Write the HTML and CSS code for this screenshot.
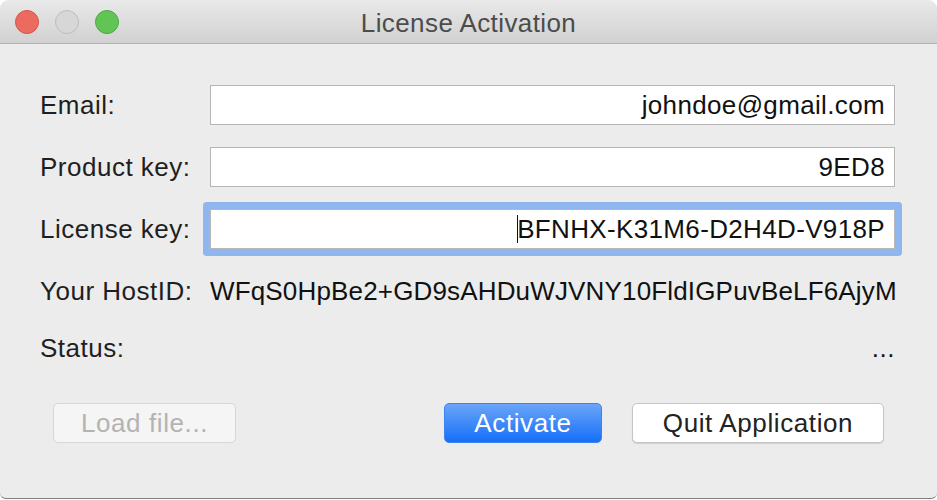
FILE: index.html
```html
<!DOCTYPE html>
<html>
<head>
<meta charset="utf-8">
<link rel="stylesheet" href="styles.css">
</head>
<body>
<div class="window">
  <div class="titlebar">
    <div class="lights">
      <span class="light red"></span>
      <span class="light gray"></span>
      <span class="light green"></span>
    </div>
    <div class="title">License Activation</div>
  </div>
  <div class="content">
    <div class="row">
      <div class="label">Email:</div>
      <div class="field">johndoe@gmail.com</div>
    </div>
    <div class="row">
      <div class="label">Product key:</div>
      <div class="field">9ED8</div>
    </div>
    <div class="row">
      <div class="label">License key:</div>
      <div class="field focused"><span class="caret"></span>BFNHX-K31M6-D2H4D-V918P</div>
    </div>
    <div class="row">
      <div class="label">Your HostID:</div>
      <div class="value host">WFqS0HpBe2+GD9sAHDuWJVNY10FldIGPuvBeLF6AjyM</div>
    </div>
    <div class="row status">
      <div class="label">Status:</div>
      <div class="value right">...</div>
    </div>
    <div class="buttons">
      <button class="btn disabled">Load file...</button>
      <div class="spacer"></div>
      <button class="btn primary">Activate</button>
      <button class="btn normal">Quit Application</button>
    </div>
  </div>
</div>
</body>
</html>
```
FILE: styles.css
```css
html, body {
  margin: 0;
  padding: 0;
  background: #ffffff;
}
body {
  font-family: "Liberation Sans", Arial, sans-serif;
  width: 937px;
  height: 500px;
  overflow: hidden;
}
.window {
  width: 937px;
  height: 498px;
  background: #ececec;
  border-radius: 9px 9px 6px 6px;
  border-bottom: 1px solid #7e7e7e;
  overflow: hidden;
  display: flex;
  flex-direction: column;
}
.titlebar {
  height: 43px;
  flex: none;
  background: linear-gradient(#e9e9e9, #d1d1d1);
  border-bottom: 1px solid #b2b2b2;
  display: flex;
  align-items: center;
  position: relative;
}
.lights {
  display: flex;
  gap: 16px;
  padding-left: 15px;
}
.light {
  width: 24px;
  height: 24px;
  border-radius: 50%;
  box-sizing: border-box;
}
.red { background: #ed6a5e; border: 1px solid #d3564a; }
.gray { background: #d7d7d7; border: 1px solid #bdbdbd; }
.green { background: #61c454; border: 1px solid #4ea842; }
.title {
  position: absolute;
  left: 0;
  right: 0;
  top: 2px;
  line-height: 43px;
  text-align: center;
  font-size: 26px;
  letter-spacing: 0.4px;
  color: #4c4c4c;
}
.content {
  flex: 1;
  padding: 41px 42px 0 40px;
  display: flex;
  flex-direction: column;
}
.row {
  display: flex;
  align-items: center;
  height: 40px;
  margin-bottom: 22px;
}
.row.status {
  margin-top: -5px;
  margin-bottom: 35px;
}
.label {
  width: 170px;
  flex: none;
  font-size: 26px;
  letter-spacing: 0.5px;
  color: #1f1f1f;
  padding-top: 1px;
}
.field {
  flex: 1;
  height: 40px;
  box-sizing: border-box;
  background: #fff;
  border: 1px solid #b6b6b6;
  font-size: 26px;
  letter-spacing: 0.35px;
  color: #111;
  text-align: right;
  padding-right: 9px;
  line-height: 39px;
  white-space: nowrap;
}
.field.focused {
  box-shadow: 0 0 0 7px #8fb7ee;
  border-radius: 1px;
  border-color: #b8b8b8;
}
.caret {
  display: inline-block;
  width: 1px;
  height: 28px;
  background: #111;
  vertical-align: -5px;
  margin-right: -1px;
}
.value {
  flex: 1;
  font-size: 26px;
  color: #111;
  white-space: nowrap;
  padding-top: 1px;
}
.value.host {
  letter-spacing: 0.16px;
}
.value.right {
  text-align: right;
  letter-spacing: 0.5px;
}
.buttons {
  display: flex;
  align-items: center;
  padding-left: 13px;
  padding-right: 11px;
}
.spacer {
  flex: 1;
}
.btn {
  font-family: "Liberation Sans", Arial, sans-serif;
  font-size: 26px;
  letter-spacing: 0.6px;
  height: 40px;
  border-radius: 5px;
  box-sizing: border-box;
  padding: 0;
}
.btn.disabled {
  width: 183px;
  background: #f5f5f5;
  border: 1px solid #d6d6d6;
  color: #b3b3b3;
}
.btn.primary {
  width: 158px;
  background: linear-gradient(#6aa5f9, #166ff8);
  border: 1px solid #3d83ef;
  color: #fff;
  margin-right: 30px;
}
.btn.normal {
  width: 252px;
  background: #fff;
  border: 1px solid #c4c4c4;
  box-shadow: 0 1px 1px rgba(0,0,0,0.12);
  color: #222;
}
```
